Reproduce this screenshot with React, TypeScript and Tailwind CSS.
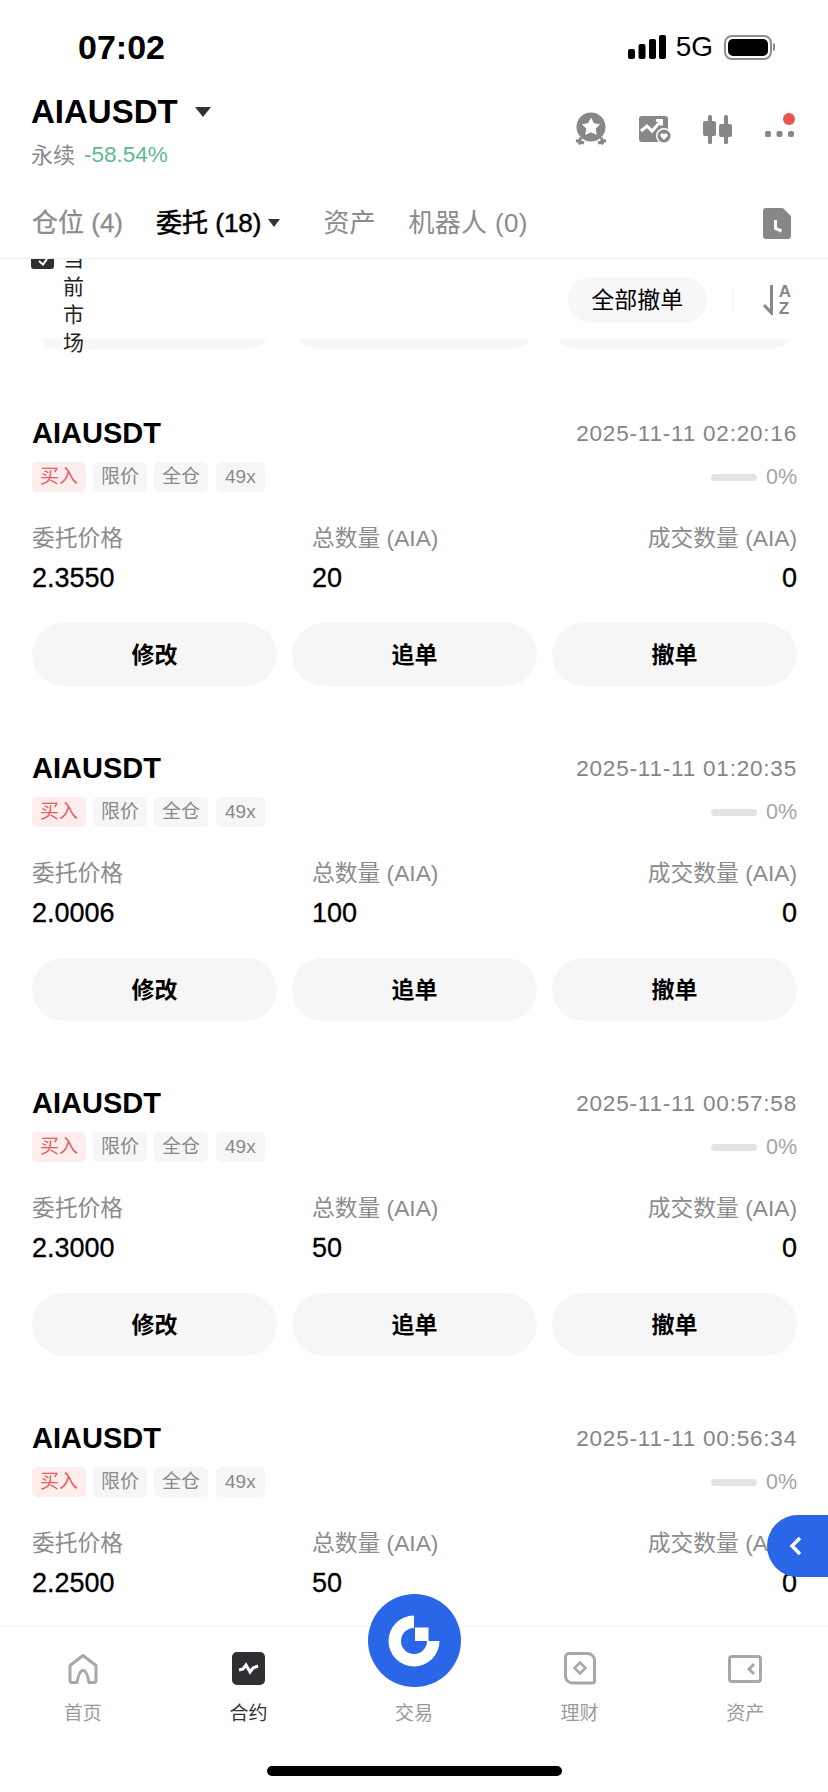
import React from "react";

const orders = [
  { time: "2025-11-11 02:20:16", price: "2.3550", total: "20" },
  { time: "2025-11-11 01:20:35", price: "2.0006", total: "100" },
  { time: "2025-11-11 00:57:58", price: "2.3000", total: "50" },
  { time: "2025-11-11 00:56:34", price: "2.2500", total: "50" },
];

const Tag = ({ label, red }: { label: string; red?: boolean }) => (
  <span
    className={`h-[30px] px-[8px] rounded-[5px] flex items-center text-[19px] ${
      red ? "bg-[#fdeded] text-[#e2605c]" : "bg-[#f6f6f7] text-[#8a8a8a]"
    }`}
  >
    {label}
  </span>
);

const ActionButton = ({ label }: { label: string }) => (
  <button className="flex-1 h-[63px] pt-[2px] rounded-full bg-[#f6f6f7] text-[23px] font-semibold text-black">
    {label}
  </button>
);

const OrderCard = ({ time, price, total }: { time: string; price: string; total: string }) => (
  <div className="h-[335px] pl-[32px] pr-[31px]">
    <div className="flex justify-between items-center h-[36px]">
      <span className="text-[29px] font-bold text-black">AIAUSDT</span>
      <span className="text-[22.5px] tracking-[0.8px] text-[#858585]">{time}</span>
    </div>
    <div className="flex justify-between items-center h-[30px] mt-[10px]">
      <div className="flex gap-[7px]">
        <Tag label="买入" red />
        <Tag label="限价" />
        <Tag label="全仓" />
        <span className="ml-[1px] h-[30px] px-[9px] rounded-[5px] flex items-center text-[19px] bg-[#f6f6f7] text-[#8a8a8a]">49x</span>
      </div>
      <div className="flex items-center gap-[9px]">
        <div className="w-[46px] h-[7px] rounded-full bg-[#e2e3e4]" />
        <span className="text-[21.5px] text-[#a5a5a5]">0%</span>
      </div>
    </div>
    <div className="grid grid-cols-[280px_1fr_auto] mt-[31px] text-[22.75px] leading-[30px] text-[#8c8c8c]">
      <span>委托价格</span>
      <span>总数量 (AIA)</span>
      <span className="text-right">成交数量 (AIA)</span>
    </div>
    <div className="grid grid-cols-[280px_1fr_auto] mt-[10px] text-[27px] leading-[30px] text-black [-webkit-text-stroke:0.3px_black]">
      <span>{price}</span>
      <span>{total}</span>
      <span className="text-right">0</span>
    </div>
    <div className="flex gap-[15px] mt-[30px]">
      <ActionButton label="修改" />
      <ActionButton label="追单" />
      <ActionButton label="撤单" />
    </div>
  </div>
);

const MedalIcon = () => (
  <svg width="34" height="36" viewBox="0 0 34 36">
    <circle cx="17" cy="15" r="14.5" fill="#858789" />
    <path d="M17 6.500l2.700 5.200 5.600.9-4 4 .9 5.600-5.200-2.400-5.200 2.400.9-5.600-4-4 5.600-.9z" fill="#fff" stroke="#fff" strokeLinejoin="round" />
    <path d="M2 28.500l8 2.500M6.500 25.500l-1 7M32 28.500l-8 2.500M27.500 25.500l1 7" stroke="#858789" strokeWidth="3" fill="none" />
  </svg>
);

const ChartHeartIcon = () => (
  <svg width="33" height="30" viewBox="0 0 33 30">
    <rect x="0" y="1" width="29" height="26" rx="3" fill="#858789" />
    <path d="M2 16l6-5 5 5 9-10M17 5.500h5.500v5" stroke="#fff" strokeWidth="3" fill="none" />
    <circle cx="25" cy="21" r="8" fill="#fff" />
    <circle cx="25" cy="21" r="6.500" fill="#858789" />
    <path d="M25 25l-3.400-3.400a2 2 0 0 1 3.400-2.400 2 2 0 0 1 3.400 2.400z" fill="#fff" />
  </svg>
);

const CandleIcon = () => (
  <svg width="30" height="30" viewBox="0 0 30 30">
    <rect x="5" y="0" width="4" height="29" rx="1.500" fill="#858789" />
    <rect x="0" y="6" width="13" height="15" rx="2" fill="#858789" />
    <rect x="21" y="0" width="4" height="29" rx="1.500" fill="#858789" />
    <rect x="16" y="9" width="13" height="13" rx="2" fill="#858789" />
  </svg>
);

const MoreIcon = () => (
  <div className="relative w-[30px] h-[30px]">
    <svg width="30" height="30" viewBox="0 0 30 30">
      <rect x="1" y="16" width="6" height="6" rx="2" fill="#858789" />
      <rect x="12.500" y="16" width="6" height="6" rx="2" fill="#858789" />
      <rect x="24" y="16" width="6" height="6" rx="2" fill="#858789" />
    </svg>
    <span className="absolute right-[-1px] top-[-2px] w-[12px] h-[12px] rounded-full bg-[#e6574a]" />
  </div>
);

const DocClockIcon = () => (
  <svg width="28" height="31" viewBox="0 0 28 31">
    <path d="M3 0h16a2 2 0 0 1 1.500.6l6.900 7a2 2 0 0 1 .6 1.500V28a3 3 0 0 1-3 3H3a3 3 0 0 1-3-3V3a3 3 0 0 1 3-3z" fill="#858789" />
    <path d="M12.500 12v8.500l6 2.500" stroke="#fff" strokeWidth="3" fill="none" />
  </svg>
);

const HomeIcon = () => (
  <svg width="32" height="32" viewBox="0 0 32 32">
    <path
      d="M16 2.500L3 12.500v15.500a1.500 1.500 0 0 0 1.500 1.500h5.500c1-6 2.500-12 6-12s5 6 6 12h5.500a1.500 1.500 0 0 0 1.500-1.500V12.500z"
      fill="none"
      stroke="#a8a8a8"
      strokeWidth="3"
      strokeLinejoin="round"
    />
  </svg>
);

const ContractIcon = () => (
  <svg width="33" height="33" viewBox="0 0 33 33">
    <rect width="33" height="33" rx="5" fill="#2f3034" />
    <path d="M7 18l4-1 3-4 4 7 3-4 5-2" fill="none" stroke="#fff" strokeWidth="3" />
  </svg>
);

const FinanceIcon = () => (
  <svg width="32" height="33" viewBox="0 0 32 33">
    <path d="M5 1.500h18a7 7 0 0 1 7.500 7.500v20a2 2 0 0 1-2 2H9a7 7 0 0 1-7.500-7.500V5a3.500 3.500 0 0 1 3.500-3.500z" fill="none" stroke="#a8a8a8" strokeWidth="3" />
    <path d="M16 10.500l5.500 5.500-5.500 5.500-5.500-5.500z" fill="none" stroke="#a8a8a8" strokeWidth="2.500" />
  </svg>
);

const AssetIcon = () => (
  <svg width="34" height="28" viewBox="0 0 34 28">
    <rect x="1.500" y="1.500" width="31" height="25" rx="2.500" fill="none" stroke="#a8a8a8" strokeWidth="3" />
    <path d="M26 9L21 14l5 5" fill="none" stroke="#a8a8a8" strokeWidth="3" />
  </svg>
);

const NavItem = ({ label, active, children }: { label: string; active?: boolean; children?: React.ReactNode }) => (
  <div className="relative flex flex-col items-center pt-[25px]">
    <div className="h-[33px] flex items-center justify-center">{children}</div>
    <span className={`mt-[16px] text-[19px] leading-[26px] ${active ? "text-[#333]" : "text-[#9b9b9b]"}`}>{label}</span>
  </div>
);

export default function App() {
  return (
    <div className="w-[828px] h-[1792px] relative overflow-hidden bg-white flex flex-col font-['Liberation_Sans','Noto_Sans_CJK_SC',sans-serif]">
      {/* status bar */}
      <div className="h-[94px] flex items-center justify-between pl-[78px] pr-[53px] shrink-0">
        <span className="text-[34px] font-semibold text-black">07:02</span>
        <div className="flex items-center">
          <svg width="38" height="24" viewBox="0 0 38 24">
            <rect x="0" y="14" width="7" height="10" rx="2" fill="#000" />
            <rect x="10.500" y="9" width="7" height="15" rx="2" fill="#000" />
            <rect x="21" y="4" width="7" height="20" rx="2" fill="#000" />
            <rect x="31" y="0" width="7" height="24" rx="2" fill="#000" />
          </svg>
          <span className="ml-[10px] text-[28px] text-black">5G</span>
          <div className="ml-[11px] w-[48px] h-[25px] rounded-[8px] border-2 border-[#8e8e8e] p-[2px]">
            <div className="w-full h-full rounded-[5px] bg-black" />
          </div>
          <div className="ml-[1px] w-[2px] h-[8px] rounded-r bg-[#8e8e8e]" />
        </div>
      </div>

      {/* header */}
      <div className="flex items-center justify-between pl-[31px] pr-[34px] shrink-0">
        <div>
          <div className="flex items-center h-[36px]">
            <span className="text-[33px] font-bold text-black">AIAUSDT</span>
            <svg className="ml-[17px]" width="16" height="10" viewBox="0 0 16 10">
              <path d="M0 0h16l-8 10z" fill="#333" />
            </svg>
          </div>
          <div className="flex items-center h-[30px] mt-[10px] text-[22px]">
            <span className="text-[#8a8a8a]">永续</span>
            <span className="ml-[9px] text-[#5cb992] text-[22.5px]">-58.54%</span>
          </div>
        </div>
        <div className="flex items-center gap-[31px] pb-[4px]">
          <MedalIcon />
          <ChartHeartIcon />
          <CandleIcon />
          <MoreIcon />
        </div>
      </div>

      {/* tabs */}
      <div className="flex items-center h-[89px] pt-[18px] pl-[32px] pr-[37px] border-b border-[#eeeeee] text-[26px] shrink-0">
        <span className="text-[#8c8c8c] [-webkit-text-stroke:0.3px_#8c8c8c]">仓位 (4)</span>
        <span className="ml-[33px] text-black [-webkit-text-stroke:0.5px_black]">委托 (18)</span>
        <svg className="ml-[7px]" width="12" height="8" viewBox="0 0 12 8">
          <path d="M0 0h12l-6 8z" fill="#333" />
        </svg>
        <span className="ml-[43px] text-[#8c8c8c]">资产</span>
        <span className="ml-[33px] tracking-[0.3px] text-[#8c8c8c]">机器人 (0)</span>
        <div className="ml-auto">
          <DocClockIcon />
        </div>
      </div>

      {/* list */}
      <div className="relative flex-1 min-h-0 overflow-hidden">
        <div className="relative h-[157px]">
          <div className="flex justify-between h-[80px]">
            <div className="flex pl-[31px] items-start relative z-10">
              <div className="w-[23px] h-[10px] rounded-b-[3px] bg-[#2f3034] flex justify-center">
                <svg width="12" height="8" viewBox="0 0 12 8">
                  <path d="M2 2l4 3.500L10 0" fill="none" stroke="#fff" strokeWidth="2" />
                </svg>
              </div>
              <div className="ml-[9px] -mt-[14px] w-[21px] bg-white text-[21px] leading-[28px] text-[#222] break-all">
                当前市场
              </div>
            </div>
            <div className="flex items-center h-[46px] mt-[18px] pr-[37px]">
              <button className="w-[139px] h-[46px] rounded-full bg-[#f7f7f7] text-[23px] text-black">全部撤单</button>
              <div className="ml-[26px] w-px h-[30px] bg-[#f8f8f8]" />
              <div className="ml-[29px] flex items-center">
                <svg width="10" height="30" viewBox="0 0 10 30">
                  <path d="M8.500 0v28L1 20" fill="none" stroke="#858789" strokeWidth="3" />
                </svg>
                <div className="ml-[6px] flex flex-col text-[17px] leading-[17px] font-bold text-[#858789]">
                  <span>A</span>
                  <span>Z</span>
                </div>
              </div>
            </div>
          </div>
          <div className="flex pl-[40px]">
            <div className="w-[226px] h-[11px] rounded-bl-[30px_11px] rounded-br-[30px_11px] bg-[#f7f7f7]" />
            <div className="ml-[34px] w-[229px] h-[11px] rounded-bl-[30px_11px] rounded-br-[30px_11px] bg-[#f7f7f7]" />
            <div className="ml-[30px] w-[230px] h-[11px] rounded-bl-[30px_11px] rounded-br-[30px_11px] bg-[#f7f7f7]" />
          </div>
        </div>
        {orders.map((o) => (
          <OrderCard key={o.time} time={o.time} price={o.price} total={o.total} />
        ))}
        <div className="absolute right-0 top-[1256px] w-[61px] h-[62px] rounded-l-full bg-[#2a66e8] flex items-center pl-[22px]">
          <svg width="14" height="20" viewBox="0 0 14 20">
            <path d="M11 2L3 10l8 8" fill="none" stroke="#fff" strokeWidth="3.500" />
          </svg>
        </div>
      </div>

      {/* bottom nav */}
      <div className="relative z-20 h-[166px] shrink-0 bg-white border-t border-[#f7f7f7] flex flex-col">
        <div className="grid grid-cols-5">
          <NavItem label="首页">
            <HomeIcon />
          </NavItem>
          <NavItem label="合约" active>
            <ContractIcon />
          </NavItem>
          <NavItem label="交易">
            <div className="absolute top-[-33px] ml-[1px] w-[93px] h-[93px] rounded-full bg-[#2a66e8] flex items-center justify-center">
              <svg width="54" height="54" viewBox="0 0 54 54">
                <path d="M27 1.500A25.500 25.500 0 1 0 52.500 27H40A13 13 0 1 1 27 14z" fill="#fff" />
                <rect x="28" y="13.500" width="13.500" height="13.500" fill="#fff" />
              </svg>
            </div>
          </NavItem>
          <NavItem label="理财">
            <FinanceIcon />
          </NavItem>
          <NavItem label="资产">
            <AssetIcon />
          </NavItem>
        </div>
        <div className="mt-auto mb-[16px] mx-auto w-[295px] h-[10px] rounded-full bg-black" />
      </div>
    </div>
  );
}
